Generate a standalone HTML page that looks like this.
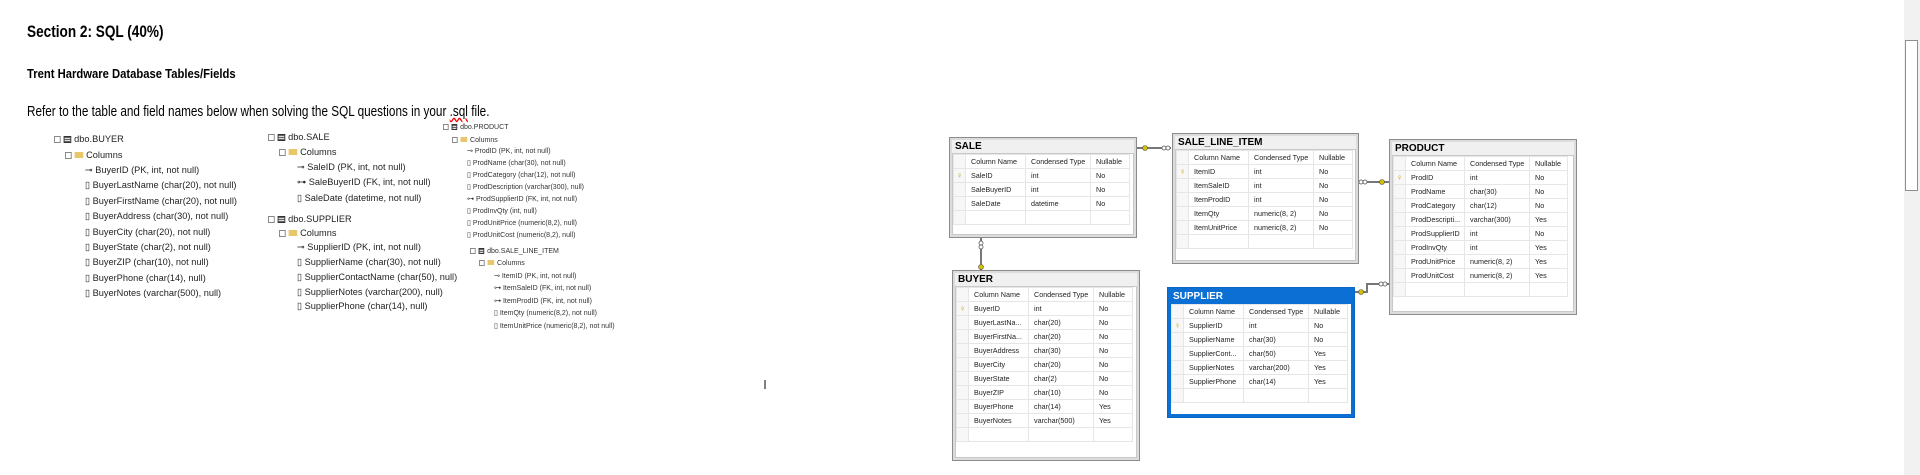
<!DOCTYPE html>
<html><head><meta charset="utf-8"><style>
body{margin:0;width:1920px;height:475px;background:#fff;position:relative;overflow:hidden;font-family:"Liberation Sans",sans-serif;color:#000}
.a{position:absolute;white-space:nowrap}
.h1{left:27px;top:22px;font-size:17px;font-weight:bold;transform:scaleX(.8);transform-origin:left}
.h2{left:27px;top:67px;font-size:12.5px;font-weight:bold;transform:scaleX(.9);transform-origin:left}
.p{left:27px;top:104px;font-size:14.5px;transform:scaleX(.81);transform-origin:left}
.t{font-size:9.6px;color:#222;transform:scaleX(.96);transform-origin:left;line-height:12px}
.s{font-size:7.4px;color:#333;transform:scaleX(.95);transform-origin:left;line-height:10px}
.ic{display:inline-block;width:7px;height:7px;border:1px solid #888;box-sizing:border-box;margin-right:3px;vertical-align:-1px}
.tb{display:inline-block;width:8px;height:7px;margin-right:3px;vertical-align:-1px;border:1px solid #333;box-sizing:border-box;background:repeating-linear-gradient(#666 0 1px,#ddd 1px 2px)}
.fd{display:inline-block;width:9px;height:6px;background:#e8c66a;margin-right:3px;vertical-align:0}
.box{position:absolute;border:1px solid #8c8c8c;background:#dcdcdc;box-sizing:border-box}
.ttl{height:13px;margin:2px 2px 0 2px;background:#f0f0f0;font-weight:bold;font-size:10px;line-height:14px;padding-left:3px}
.bd{position:absolute;left:2px;right:2px;top:15px;bottom:2px;background:#fff;border:1px solid #c8c8c8}
table{border-collapse:collapse;font-size:7.2px;color:#222}
td{border:1px solid #e6e6e6;height:13px;padding:0 0 0 5px;white-space:nowrap;overflow:hidden}
td.r{width:11px;padding:0;background:#f7f7f7;text-align:center}
.k{color:#b8a000;font-size:8px;font-weight:bold}
</style></head><body>
<div class="a h1">Section 2: SQL (40%)</div>
<div class="a h2">Trent Hardware Database Tables/Fields</div>
<div class="a p">Refer to the table and field names below when solving the SQL questions in your <span style="text-decoration:underline wavy red">.sql</span> file.</div>

<div class="a t" style="left:54px;top:134px"><span class="ic"></span><span class="tb"></span>dbo.BUYER</div>
<div class="a t" style="left:65px;top:150px"><span class="ic"></span><span class="fd"></span>Columns</div>
<div class="a t" style="left:85px;top:165px">⊸ BuyerID (PK, int, not null)</div>
<div class="a t" style="left:85px;top:180px">▯ BuyerLastName (char(20), not null)</div>
<div class="a t" style="left:85px;top:196px">▯ BuyerFirstName (char(20), not null)</div>
<div class="a t" style="left:85px;top:211px">▯ BuyerAddress (char(30), not null)</div>
<div class="a t" style="left:85px;top:227px">▯ BuyerCity (char(20), not null)</div>
<div class="a t" style="left:85px;top:242px">▯ BuyerState (char(2), not null)</div>
<div class="a t" style="left:85px;top:257px">▯ BuyerZIP (char(10), not null)</div>
<div class="a t" style="left:85px;top:273px">▯ BuyerPhone (char(14), null)</div>
<div class="a t" style="left:85px;top:288px">▯ BuyerNotes (varchar(500), null)</div>

<div class="a t" style="left:268px;top:132px"><span class="ic"></span><span class="tb"></span>dbo.SALE</div>
<div class="a t" style="left:279px;top:147px"><span class="ic"></span><span class="fd"></span>Columns</div>
<div class="a t" style="left:297px;top:162px">⊸ SaleID (PK, int, not null)</div>
<div class="a t" style="left:297px;top:177px">⊶ SaleBuyerID (FK, int, not null)</div>
<div class="a t" style="left:297px;top:193px">▯ SaleDate (datetime, not null)</div>
<div class="a t" style="left:268px;top:214px"><span class="ic"></span><span class="tb"></span>dbo.SUPPLIER</div>
<div class="a t" style="left:279px;top:228px"><span class="ic"></span><span class="fd"></span>Columns</div>
<div class="a t" style="left:297px;top:242px">⊸ SupplierID (PK, int, not null)</div>
<div class="a t" style="left:297px;top:257px">▯ SupplierName (char(30), not null)</div>
<div class="a t" style="left:297px;top:272px">▯ SupplierContactName (char(50), null)</div>
<div class="a t" style="left:297px;top:287px">▯ SupplierNotes (varchar(200), null)</div>
<div class="a t" style="left:297px;top:301px">▯ SupplierPhone (char(14), null)</div>

<div class="a s" style="left:443px;top:122px"><span class="ic" style="width:6px;height:6px"></span><span class="tb" style="width:6px;height:6px"></span>dbo.PRODUCT</div>
<div class="a s" style="left:452px;top:135px"><span class="ic" style="width:6px;height:6px"></span><span class="fd" style="width:7px;height:5px"></span>Columns</div>
<div class="a s" style="left:467px;top:146px">⊸ ProdID (PK, int, not null)</div>
<div class="a s" style="left:467px;top:158px">▯ ProdName (char(30), not null)</div>
<div class="a s" style="left:467px;top:170px">▯ ProdCategory (char(12), not null)</div>
<div class="a s" style="left:467px;top:182px">▯ ProdDescription (varchar(300), null)</div>
<div class="a s" style="left:467px;top:194px">⊶ ProdSupplierID (FK, int, not null)</div>
<div class="a s" style="left:467px;top:206px">▯ ProdInvQty (int, null)</div>
<div class="a s" style="left:467px;top:218px">▯ ProdUnitPrice (numeric(8,2), null)</div>
<div class="a s" style="left:467px;top:230px">▯ ProdUnitCost (numeric(8,2), null)</div>
<div class="a s" style="left:470px;top:246px"><span class="ic" style="width:6px;height:6px"></span><span class="tb" style="width:6px;height:6px"></span>dbo.SALE_LINE_ITEM</div>
<div class="a s" style="left:479px;top:258px"><span class="ic" style="width:6px;height:6px"></span><span class="fd" style="width:7px;height:5px"></span>Columns</div>
<div class="a s" style="left:494px;top:271px">⊸ ItemID (PK, int, not null)</div>
<div class="a s" style="left:494px;top:283px">⊶ ItemSaleID (FK, int, not null)</div>
<div class="a s" style="left:494px;top:296px">⊶ ItemProdID (FK, int, not null)</div>
<div class="a s" style="left:494px;top:308px">▯ ItemQty (numeric(8,2), not null)</div>
<div class="a s" style="left:494px;top:321px">▯ ItemUnitPrice (numeric(8,2), not null)</div>

<svg class="a" style="left:0;top:0" width="1920" height="475">
<g stroke="#777" stroke-width="2" fill="none">
<line x1="1137" y1="148" x2="1171" y2="148"/>
<line x1="981" y1="238" x2="981" y2="270"/>
<line x1="1359" y1="182" x2="1389" y2="182"/>
<polyline points="1355,292 1367,292 1367,284 1389,284"/>
</g>
<g fill="#d4c200" stroke="#555" stroke-width=".6">
<circle cx="1145" cy="148" r="2.5"/><circle cx="981" cy="267" r="2.5"/><circle cx="1382" cy="182" r="2.5"/><circle cx="1361" cy="292" r="2.5"/>
</g>
<g fill="#fff" stroke="#555" stroke-width=".8">
<circle cx="1164" cy="148" r="2"/><circle cx="1168" cy="148" r="2"/>
<circle cx="981" cy="243" r="2"/><circle cx="981" cy="247" r="2"/>
<circle cx="1361" cy="182" r="2"/><circle cx="1365" cy="182" r="2"/>
<circle cx="1381" cy="284" r="2"/><circle cx="1385" cy="284" r="2"/>
</g>
<line x1="765" y1="380" x2="765" y2="389" stroke="#000"/>
</svg>

<div class="box" style="left:949px;top:137px;width:188px;height:101px"><div class="ttl">SALE</div><div class="bd">
<table><tr><td class="r"></td><td style="width:54px">Column Name</td><td style="width:59px">Condensed Type</td><td style="width:33px">Nullable</td></tr>
<tr><td class="r"><span class="k">♀</span></td><td>SaleID</td><td>int</td><td>No</td></tr>
<tr><td class="r"></td><td>SaleBuyerID</td><td>int</td><td>No</td></tr>
<tr><td class="r"></td><td>SaleDate</td><td>datetime</td><td>No</td></tr>
<tr><td class="r"></td><td></td><td></td><td></td></tr></table></div></div>

<div class="box" style="left:1172px;top:133px;width:187px;height:131px"><div class="ttl">SALE_LINE_ITEM</div><div class="bd">
<table><tr><td class="r"></td><td style="width:54px">Column Name</td><td style="width:59px">Condensed Type</td><td style="width:33px">Nullable</td></tr>
<tr><td class="r"><span class="k">♀</span></td><td>ItemID</td><td>int</td><td>No</td></tr>
<tr><td class="r"></td><td>ItemSaleID</td><td>int</td><td>No</td></tr>
<tr><td class="r"></td><td>ItemProdID</td><td>int</td><td>No</td></tr>
<tr><td class="r"></td><td>ItemQty</td><td>numeric(8, 2)</td><td>No</td></tr>
<tr><td class="r"></td><td>ItemUnitPrice</td><td>numeric(8, 2)</td><td>No</td></tr>
<tr><td class="r"></td><td></td><td></td><td></td></tr></table></div></div>

<div class="box" style="left:1389px;top:139px;width:188px;height:176px"><div class="ttl">PRODUCT</div><div class="bd">
<table><tr><td class="r"></td><td style="width:53px">Column Name</td><td style="width:59px">Condensed Type</td><td style="width:32px">Nullable</td></tr>
<tr><td class="r"><span class="k">♀</span></td><td>ProdID</td><td>int</td><td>No</td></tr>
<tr><td class="r"></td><td>ProdName</td><td>char(30)</td><td>No</td></tr>
<tr><td class="r"></td><td>ProdCategory</td><td>char(12)</td><td>No</td></tr>
<tr><td class="r"></td><td>ProdDescripti...</td><td>varchar(300)</td><td>Yes</td></tr>
<tr><td class="r"></td><td>ProdSupplierID</td><td>int</td><td>No</td></tr>
<tr><td class="r"></td><td>ProdInvQty</td><td>int</td><td>Yes</td></tr>
<tr><td class="r"></td><td>ProdUnitPrice</td><td>numeric(8, 2)</td><td>Yes</td></tr>
<tr><td class="r"></td><td>ProdUnitCost</td><td>numeric(8, 2)</td><td>Yes</td></tr>
<tr><td class="r"></td><td></td><td></td><td></td></tr></table></div></div>

<div class="box" style="left:1167px;top:287px;width:188px;height:131px;border-color:#0b66c8;background:#0b6fd3"><div class="ttl" style="background:#0b6fd3;color:#fff">SUPPLIER</div><div class="bd" style="border-color:#0b6fd3">
<table><tr><td class="r"></td><td style="width:54px">Column Name</td><td style="width:59px">Condensed Type</td><td style="width:33px">Nullable</td></tr>
<tr><td class="r"><span class="k">♀</span></td><td>SupplierID</td><td>int</td><td>No</td></tr>
<tr><td class="r"></td><td>SupplierName</td><td>char(30)</td><td>No</td></tr>
<tr><td class="r"></td><td>SupplierCont...</td><td>char(50)</td><td>Yes</td></tr>
<tr><td class="r"></td><td>SupplierNotes</td><td>varchar(200)</td><td>Yes</td></tr>
<tr><td class="r"></td><td>SupplierPhone</td><td>char(14)</td><td>Yes</td></tr>
<tr><td class="r"></td><td></td><td></td><td></td></tr></table></div></div>

<div class="box" style="left:952px;top:270px;width:188px;height:191px"><div class="ttl">BUYER</div><div class="bd">
<table><tr><td class="r"></td><td style="width:54px">Column Name</td><td style="width:59px">Condensed Type</td><td style="width:33px">Nullable</td></tr>
<tr><td class="r"><span class="k">♀</span></td><td>BuyerID</td><td>int</td><td>No</td></tr>
<tr><td class="r"></td><td>BuyerLastNa...</td><td>char(20)</td><td>No</td></tr>
<tr><td class="r"></td><td>BuyerFirstNa...</td><td>char(20)</td><td>No</td></tr>
<tr><td class="r"></td><td>BuyerAddress</td><td>char(30)</td><td>No</td></tr>
<tr><td class="r"></td><td>BuyerCity</td><td>char(20)</td><td>No</td></tr>
<tr><td class="r"></td><td>BuyerState</td><td>char(2)</td><td>No</td></tr>
<tr><td class="r"></td><td>BuyerZIP</td><td>char(10)</td><td>No</td></tr>
<tr><td class="r"></td><td>BuyerPhone</td><td>char(14)</td><td>Yes</td></tr>
<tr><td class="r"></td><td>BuyerNotes</td><td>varchar(500)</td><td>Yes</td></tr>
<tr><td class="r"></td><td></td><td></td><td></td></tr></table></div></div>

<div class="a" style="left:1904px;top:0;width:16px;height:475px;background:#f1f1f1"></div>
<div class="a" style="left:1905px;top:40px;width:13px;height:151px;background:#fff;border:1px solid #8e8e8e;box-sizing:border-box"></div>
</body></html>
